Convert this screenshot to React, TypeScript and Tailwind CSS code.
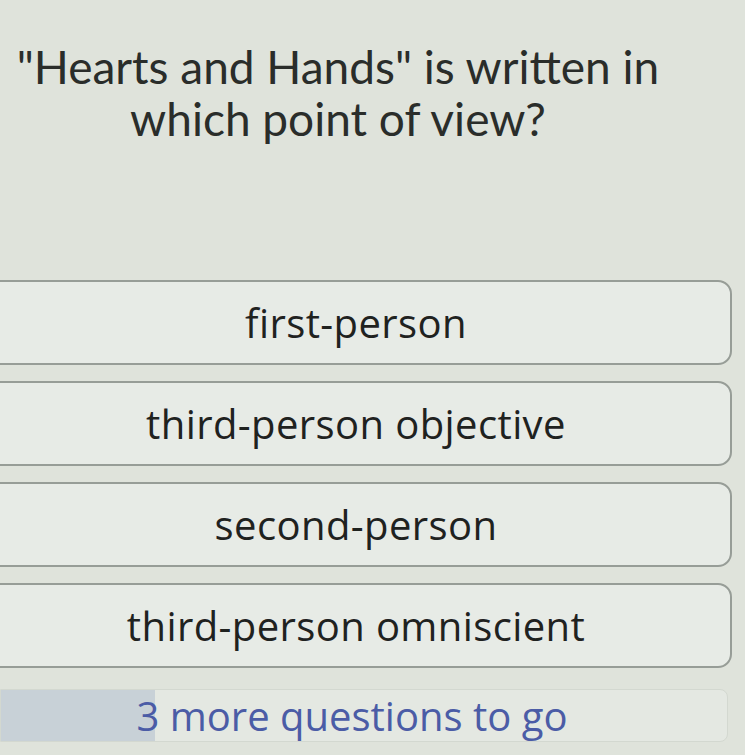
const answers = [
  'first-person',
  'third-person objective',
  'second-person',
  'third-person omniscient',
];

export default function App() {
  const done = 154;

  return (
    <div
      className="w-[745px] h-[755px] overflow-hidden bg-[#dfe3db] text-[#222522]"
      style={{ fontFamily: '"Open Sans", "Noto Sans", sans-serif' }}
    >
      {/* Question */}
      <div
        className="pt-[41px] pr-[69px] text-center text-[46px] leading-[52px] text-[#2a2d2a] whitespace-nowrap"
        style={{ fontFamily: 'Lato, "Open Sans", sans-serif' }}
      >
        <div>"Hearts and Hands" is written in</div>
        <div>which point of view?</div>
      </div>

      {/* Answers */}
      <div className="mt-[135px] flex flex-col gap-[16px] ml-[-20px] w-[752px]">
        {answers.map(a => (
          <button
            key={a}
            className="h-[85px] w-full flex items-center justify-center rounded-[14px] border-2 border-[#979d97] bg-[#e7ebe6] text-[40px] text-[#1f221f] tracking-[0.01em]"
          >
            {a}
          </button>
        ))}
      </div>

      {/* Progress */}
      <div className="mt-[21px] relative h-[53px] w-[728px] rounded-r-[8px] border border-[#d3d8d0] bg-[#e4e8e2] overflow-hidden">
        <div className="absolute left-0 top-0 h-full bg-[#c8d1d7]" style={{ width: done }} />
        <div className="relative h-full flex items-center justify-center pr-[24px] text-[40px] text-[#4b5ca6]">
          3 more questions to go
        </div>
      </div>
    </div>
  );
}
